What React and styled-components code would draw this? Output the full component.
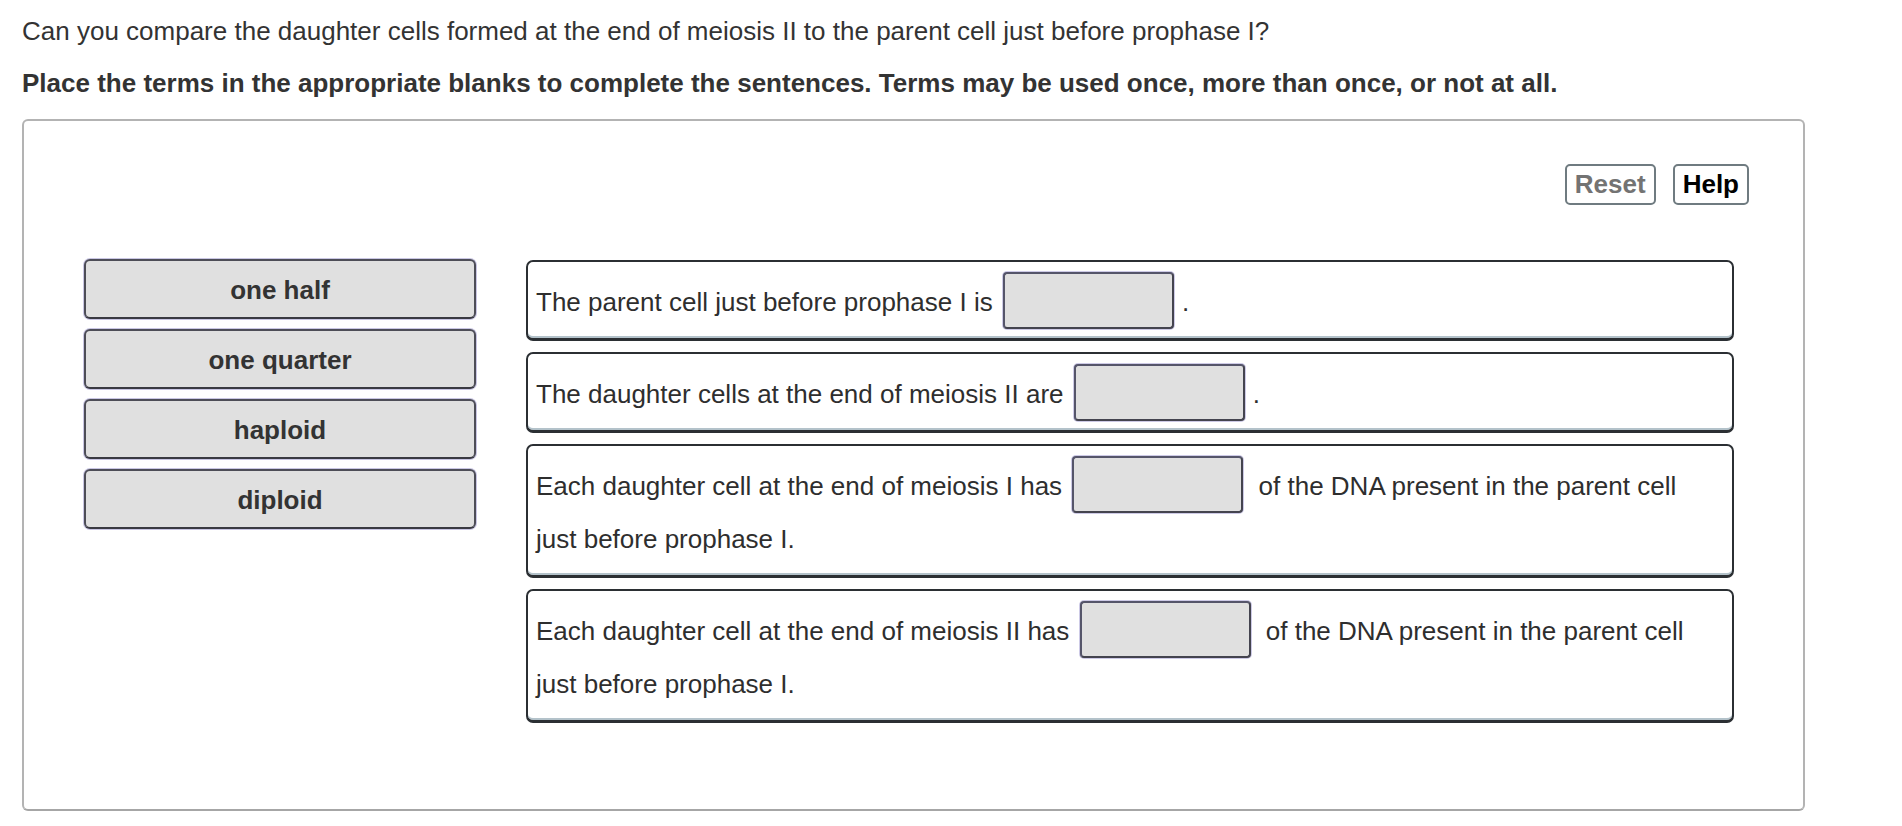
import React from "react";
import styled, { createGlobalStyle } from "styled-components";

const GlobalStyle = createGlobalStyle`
  html, body { margin: 0; padding: 0; background: #ffffff; }
  body {
    font-family: "Liberation Sans", Arial, Helvetica, sans-serif;
    color: #333333;
  }
  * { box-sizing: border-box; }
`;

const Page = styled.div`
  padding: 16px 22px 0 22px;
`;

const Question = styled.p`
  margin: 0;
  font-size: 26px;
  line-height: 30px;
  font-weight: normal;
  color: #333333;
`;

const Instruction = styled.p`
  margin: 22px 0 0 0;
  font-size: 26px;
  line-height: 30px;
  font-weight: bold;
  color: #333333;
`;

const Panel = styled.div`
  margin-top: 21px;
  width: 1783px;
  height: 692px;
  border: 2px solid #b3b3b3;
  border-bottom-color: #a6a6a6;
  border-radius: 6px;
  padding: 43px 54px 0 60px;
`;

const Toolbar = styled.div`
  display: flex;
  justify-content: flex-end;
  gap: 17px;
`;

const ToolButton = styled.button`
  height: 41px;
  padding: 0 8px;
  background: #ffffff;
  border: 2px solid #6f7b80;
  border-radius: 5px;
  font-family: "Liberation Sans", Arial, sans-serif;
  font-weight: bold;
  font-size: 26px;
  line-height: 37px;
  color: ${(p) => (p.$muted ? "#737373" : "#000000")};
  cursor: pointer;
`;

const Content = styled.div`
  display: flex;
  align-items: flex-start;
  gap: 50px;
  margin-top: 54px;
`;

const TermList = styled.div`
  display: flex;
  flex-direction: column;
  gap: 10px;
  width: 392px;
  flex: none;
`;

const Term = styled.div`
  height: 60px;
  display: flex;
  align-items: center;
  justify-content: center;
  padding-top: 3px;
  background: #e0e0e0;
  border: 2px solid #4d4d57;
  border-bottom-color: #3a3a42;
  border-radius: 6px;
  box-shadow: 0 0 0 1px #c9c6e3;
  font-weight: bold;
  font-size: 26px;
  color: #333333;
`;

const SentenceList = styled.div`
  display: flex;
  flex-direction: column;
  gap: 11px;
  width: 1208px;
  flex: none;
  margin-top: 1px;
`;

const Sentence = styled.div`
  border: 2px solid #2b2f33;
  border-bottom-width: 3px;
  border-radius: 7px;
  box-shadow: inset 0 -2px 0 #b3c2ca;
  padding: 10px 14px 9px 8px;
  font-size: 26px;
  line-height: 53px;
  color: #2e2e2e;
`;

const Blank = styled.span`
  display: inline-block;
  width: 171px;
  height: 57px;
  vertical-align: -18px;
  margin: 0 8px 0 3px;
  background: #e0e0e0;
  border: 2px solid #55556a;
  border-right-color: #44444f;
  border-bottom-color: #44444f;
  border-radius: 4px;
  box-shadow: 0 0 0 1px #cdcae6;
`;

const sentences = [
  { before: "The parent cell just before prophase I is ", after: "." },
  { before: "The daughter cells at the end of meiosis II are ", after: "." },
  {
    before: "Each daughter cell at the end of meiosis I has ",
    after: " of the DNA present in the parent cell just before prophase I.",
  },
  {
    before: "Each daughter cell at the end of meiosis II has ",
    after: " of the DNA present in the parent cell just before prophase I.",
  },
];

const terms = ["one half", "one quarter", "haploid", "diploid"];

export default function App() {
  return (
    <>
      <GlobalStyle />
      <Page>
        <Question>
          Can you compare the daughter cells formed at the end of meiosis II to
          the parent cell just before prophase I?
        </Question>
        <Instruction>
          Place the terms in the appropriate blanks to complete the sentences.
          Terms may be used once, more than once, or not at all.
        </Instruction>
        <Panel>
          <Toolbar>
            <ToolButton $muted>Reset</ToolButton>
            <ToolButton>Help</ToolButton>
          </Toolbar>
          <Content>
            <TermList>
              {terms.map((t) => (
                <Term key={t}>{t}</Term>
              ))}
            </TermList>
            <SentenceList>
              {sentences.map((s, i) => (
                <Sentence key={i}>
                  {s.before}
                  <Blank />
                  {s.after}
                </Sentence>
              ))}
            </SentenceList>
          </Content>
        </Panel>
      </Page>
    </>
  );
}
